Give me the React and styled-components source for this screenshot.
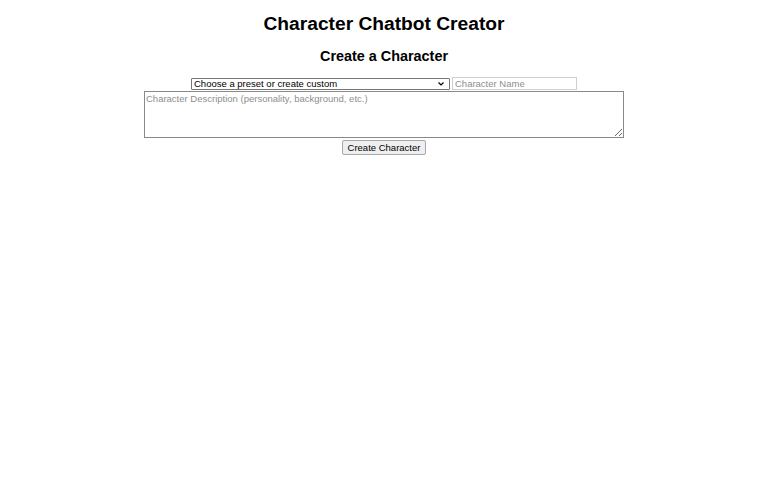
import React from 'react';
import styled, { createGlobalStyle } from 'styled-components';

const GlobalStyle = createGlobalStyle`
  html, body {
    margin: 0;
    padding: 0;
    background: #ffffff;
  }
  body {
    font-family: "Liberation Sans", Arial, sans-serif;
    color: #000000;
  }
`;

const Page = styled.div`
  padding: 0 5px;
  text-align: center;
`;

const Title = styled.h1`
  font-size: 19.2px;
  font-weight: bold;
  margin: 13px 0 0;
  line-height: 22px;
`;

const Subtitle = styled.h2`
  font-size: 14.4px;
  font-weight: bold;
  margin: 13px 0 0;
  line-height: 17px;
`;

const Form = styled.div`
  margin-top: 12px;
  display: flex;
  flex-direction: column;
  align-items: center;
  gap: 1px;
`;

const Row = styled.div`
  display: flex;
  gap: 2px;
  align-items: center;
`;

const SelectWrap = styled.div`
  position: relative;
  display: flex;
`;

const Select = styled.select`
  appearance: none;
  width: 259px;
  height: 12px;
  box-sizing: border-box;
  font-family: "Liberation Sans", Arial, sans-serif;
  font-size: 9.5px;
  line-height: 10px;
  padding: 0 0 0 2px;
  border: 1px solid #767676;
  border-radius: 1px;
  background: #ffffff;
  color: #000000;
`;

const Chevron = styled.svg`
  position: absolute;
  right: 6px;
  top: 4px;
  pointer-events: none;
`;

const TextInput = styled.input`
  width: 125px;
  height: 13px;
  box-sizing: border-box;
  font-family: "Liberation Sans", Arial, sans-serif;
  font-size: 9.5px;
  padding: 0 2px;
  border: 1px solid #cfcfcf;
  outline: none;
  &::placeholder {
    color: #8e8e8e;
  }
`;

const Description = styled.textarea`
  width: 480px;
  height: 47px;
  box-sizing: border-box;
  font-family: "Liberation Sans", Arial, sans-serif;
  font-size: 9.5px;
  line-height: 11px;
  padding: 1px;
  border: 1px solid #8a8a8a;
  resize: both;
  &::placeholder {
    color: #8e8e8e;
  }
`;

const Button = styled.button`
  margin-top: 1px;
  width: 84px;
  height: 15px;
  font-family: "Liberation Sans", Arial, sans-serif;
  font-size: 9.5px;
  line-height: 10px;
  padding: 0;
  border: 1px solid #a8a8a8;
  border-radius: 2px;
  background: #efefef;
  color: #000000;
`;

export default function App() {
  return (
    <Page>
      <GlobalStyle />
      <Title>Character Chatbot Creator</Title>
      <Subtitle>Create a Character</Subtitle>
      <Form>
        <Row>
          <SelectWrap>
            <Select defaultValue="">
              <option value="">Choose a preset or create custom</option>
            </Select>
            <Chevron width="6" height="4" viewBox="0 0 6 4">
              <path d="M0.5 0.5 L3 3 L5.5 0.5" fill="none" stroke="#000" strokeWidth="1.2" />
            </Chevron>
          </SelectWrap>
          <TextInput placeholder="Character Name" />
        </Row>
        <Description placeholder="Character Description (personality, background, etc.)" />
        <Button>Create Character</Button>
      </Form>
    </Page>
  );
}
